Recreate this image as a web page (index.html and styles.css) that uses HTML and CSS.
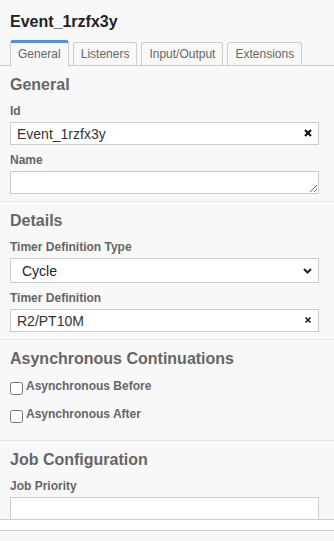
FILE: index.html
```html
<!DOCTYPE html>
<html>
<head>
<meta charset="utf-8">
<link rel="stylesheet" href="styles.css">
</head>
<body>
<div class="panel">
  <div class="scroll">
    <div class="header"><div class="title">Event_1rzfx3y</div></div>
    <div class="tabs">
      <div class="tab active">General</div>
      <div class="tab">Listeners</div>
      <div class="tab">Input/Output</div>
      <div class="tab">Extensions</div>
    </div>

    <div class="group">
      <h2>General</h2>
      <div class="field">
        <label>Id</label>
        <div class="wrap">
          <input class="input" type="text" value="Event_1rzfx3y">
          <span class="clear bold"><svg width="8" height="8" viewBox="0 0 8 8"><path d="M1 1L7 7M7 1L1 7" stroke="#111" stroke-width="2.1" fill="none"/></svg></span>
        </div>
      </div>
      <div class="field">
        <label>Name</label>
        <textarea class="input area"></textarea>
      </div>
    </div>

    <div class="group">
      <h2>Details</h2>
      <div class="field">
        <label>Timer Definition Type</label>
        <div class="wrap">
          <select class="input select"><option>Cycle</option></select>
          <span class="chev"><svg width="9" height="6" viewBox="0 0 9 6"><path d="M1 1L4.5 4.5L8 1" stroke="#222" stroke-width="2" fill="none"/></svg></span>
        </div>
      </div>
      <div class="field">
        <label>Timer Definition</label>
        <div class="wrap">
          <input class="input" type="text" value="R2/PT10M">
          <span class="clear"><svg width="8" height="8" viewBox="0 0 8 8"><path d="M1.5 1.5L6.5 6.5M6.5 1.5L1.5 6.5" stroke="#222" stroke-width="1.7" fill="none"/></svg></span>
        </div>
      </div>
    </div>

    <div class="group async">
      <h2>Asynchronous Continuations</h2>
      <div class="checks">
        <label class="check"><input type="checkbox"><span>Asynchronous Before</span></label>
        <label class="check"><input type="checkbox"><span>Asynchronous After</span></label>
      </div>
    </div>

    <div class="group">
      <h2>Job Configuration</h2>
      <div class="field">
        <label>Job Priority</label>
        <input class="input" type="text" value="">
      </div>
    </div>
  </div>
  <div class="hbar"></div>
</div>
</body>
</html>
```

FILE: styles.css
```css
* { box-sizing: border-box; }
body {
  margin: 0;
  background: #f8f8f8;
  font-family: "Liberation Sans", Arial, sans-serif;
}
.panel { width: 334px; }
.scroll { height: 519px; overflow: hidden; }
.header { padding: 11px 10px 0; }
.title {
  font-size: 16px;
  font-weight: bold;
  line-height: 21px;
  color: #222;
}
.tabs {
  display: flex;
  align-items: flex-end;
  gap: 4px;
  height: 26px;
  margin-top: 8px;
  padding-left: 10px;
  border-bottom: 1px solid #ccc;
}
.tab {
  font-size: 12px;
  line-height: 16px;
  color: #666;
  padding: 3px 7px;
  border: 1px solid #ccc;
  border-bottom: 0;
  border-radius: 3px 3px 0 0;
  background: #f8f8f8;
}
.tab.active {
  border-top: 3px solid #5590dd;
  padding-bottom: 4px;
  margin-bottom: -1px;
}
.group {
  padding: 8px 15px 7px 10px;
  border-bottom: 1px solid #e6e6e6;
}
.group h2 {
  margin: 0 0 9px;
  font-size: 16px;
  line-height: 21px;
  font-weight: bold;
  color: #666;
}
.field { margin-bottom: 8px; }
.field:last-child { margin-bottom: 0; }
.field > label {
  display: block;
  font-size: 12px;
  font-weight: bold;
  line-height: 14px;
  color: #666;
  margin-bottom: 4px;
}
.wrap { position: relative; }
.input {
  display: block;
  width: 100%;
  height: 23px;
  margin: 0;
  border: 1px solid #ccc;
  border-radius: 0;
  background: #fff;
  font-family: "Liberation Sans", Arial, sans-serif;
  font-size: 14px;
  color: #333;
  padding: 0 24px 0 6px;
  outline: none;
}
.area { resize: vertical; padding: 2px 6px; }
.select {
  height: 25px;
  appearance: none;
  -webkit-appearance: none;
  padding-left: 11px;
  color: #222;
}
.clear {
  position: absolute;
  right: 7px;
  top: 7px;
  width: 8px;
  height: 8px;
  display: flex;
}
.chev {
  position: absolute;
  right: 7px;
  top: 10px;
  width: 9px;
  height: 6px;
  display: flex;
}
.checks { padding-top: 1px; }
.check {
  display: flex;
  align-items: flex-start;
  height: 14px;
  font-size: 12px;
  font-weight: bold;
  line-height: 14px;
  color: #666;
  margin-bottom: 14px;
}
.check:last-child { margin-bottom: 12px; }
.check input {
  flex: none;
  width: 13px;
  height: 13px;
  margin: 3px 3px 0 0;
}
.hbar {
  height: 12px;
  background: #fff;
  border-top: 1px solid #ccc;
  border-bottom: 1px solid #ccc;
}
```
